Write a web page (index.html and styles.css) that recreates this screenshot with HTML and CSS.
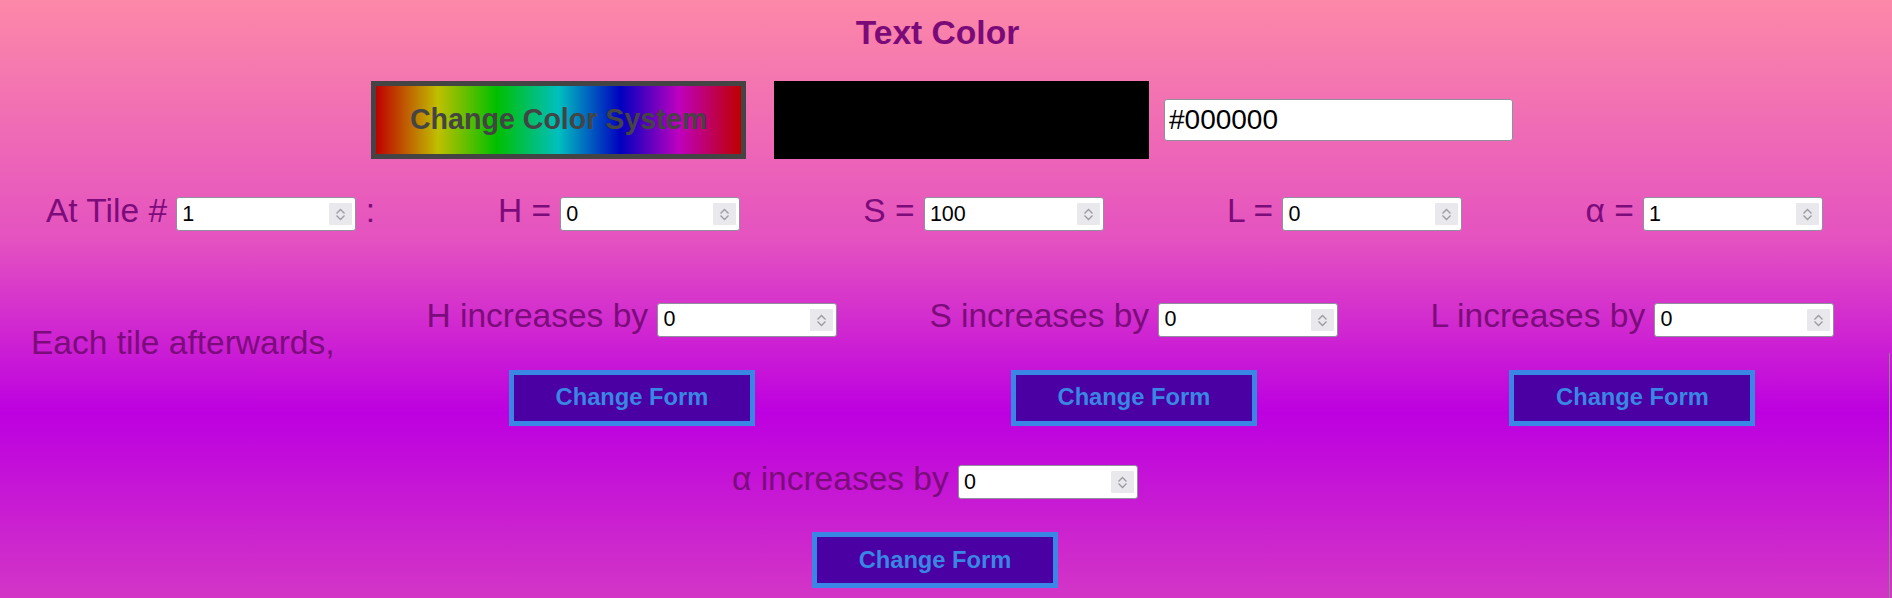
FILE: index.html
```html
<!DOCTYPE html>
<html lang="en">
<head>
<meta charset="utf-8">
<title>Text Color</title>
<link rel="stylesheet" href="styles.css">
</head>
<body>
<div class="page">
  <h1 class="title">Text Color</h1>

  <div class="row-top">
    <button class="system-btn" type="button">Change Color System</button>
    <div class="swatch"></div>
    <input class="hex" type="text" value="#000000">
  </div>

  <div class="row-start">
    <label class="grp">At Tile # <span class="numwrap"><input class="num" type="number" value="1"><span class="spin"><svg viewBox="0 0 23 22" width="23" height="22"><path d="M7.5 10.5 L11.5 6.5 L15.5 10.5 M7.5 12.5 L11.5 16.5 L15.5 12.5" fill="none" stroke="#9a9aa2" stroke-width="1.3"/></svg></span></span> :</label>
    <label class="grp">H = <span class="numwrap"><input class="num" type="number" value="0"><span class="spin"><svg viewBox="0 0 23 22" width="23" height="22"><path d="M7.5 10.5 L11.5 6.5 L15.5 10.5 M7.5 12.5 L11.5 16.5 L15.5 12.5" fill="none" stroke="#9a9aa2" stroke-width="1.3"/></svg></span></span></label>
    <label class="grp">S = <span class="numwrap"><input class="num" type="number" value="100"><span class="spin"><svg viewBox="0 0 23 22" width="23" height="22"><path d="M7.5 10.5 L11.5 6.5 L15.5 10.5 M7.5 12.5 L11.5 16.5 L15.5 12.5" fill="none" stroke="#9a9aa2" stroke-width="1.3"/></svg></span></span></label>
    <label class="grp">L = <span class="numwrap"><input class="num" type="number" value="0"><span class="spin"><svg viewBox="0 0 23 22" width="23" height="22"><path d="M7.5 10.5 L11.5 6.5 L15.5 10.5 M7.5 12.5 L11.5 16.5 L15.5 12.5" fill="none" stroke="#9a9aa2" stroke-width="1.3"/></svg></span></span></label>
    <label class="grp">α = <span class="numwrap"><input class="num" type="number" value="1"><span class="spin"><svg viewBox="0 0 23 22" width="23" height="22"><path d="M7.5 10.5 L11.5 6.5 L15.5 10.5 M7.5 12.5 L11.5 16.5 L15.5 12.5" fill="none" stroke="#9a9aa2" stroke-width="1.3"/></svg></span></span></label>
  </div>

  <div class="row-inc">
    <div class="each">Each tile afterwards,</div>
    <div class="col">
      <label class="grp">H increases by <span class="numwrap"><input class="num" type="number" value="0"><span class="spin"><svg viewBox="0 0 23 22" width="23" height="22"><path d="M7.5 10.5 L11.5 6.5 L15.5 10.5 M7.5 12.5 L11.5 16.5 L15.5 12.5" fill="none" stroke="#9a9aa2" stroke-width="1.3"/></svg></span></span></label>
      <button class="form-btn" type="button">Change Form</button>
    </div>
    <div class="col">
      <label class="grp">S increases by <span class="numwrap"><input class="num" type="number" value="0"><span class="spin"><svg viewBox="0 0 23 22" width="23" height="22"><path d="M7.5 10.5 L11.5 6.5 L15.5 10.5 M7.5 12.5 L11.5 16.5 L15.5 12.5" fill="none" stroke="#9a9aa2" stroke-width="1.3"/></svg></span></span></label>
      <button class="form-btn" type="button">Change Form</button>
    </div>
    <div class="col">
      <label class="grp">L increases by <span class="numwrap"><input class="num" type="number" value="0"><span class="spin"><svg viewBox="0 0 23 22" width="23" height="22"><path d="M7.5 10.5 L11.5 6.5 L15.5 10.5 M7.5 12.5 L11.5 16.5 L15.5 12.5" fill="none" stroke="#9a9aa2" stroke-width="1.3"/></svg></span></span></label>
      <button class="form-btn" type="button">Change Form</button>
    </div>
  </div>

  <div class="row-alpha">
    <div class="col">
      <label class="grp">α increases by <span class="numwrap"><input class="num" type="number" value="0"><span class="spin"><svg viewBox="0 0 23 22" width="23" height="22"><path d="M7.5 10.5 L11.5 6.5 L15.5 10.5 M7.5 12.5 L11.5 16.5 L15.5 12.5" fill="none" stroke="#9a9aa2" stroke-width="1.3"/></svg></span></span></label>
      <button class="form-btn" type="button">Change Form</button>
    </div>
  </div>
</div>
<div class="edge-line"></div>
</body>
</html>
```

FILE: styles.css
```css
html, body {
  margin: 0;
  padding: 0;
}

body {
  width: 1892px;
  height: 598px;
  overflow: hidden;
  position: relative;
  font-family: "Liberation Sans", Arial, sans-serif;
  color: #7c0c7c;
  background: linear-gradient(180deg, #fc88a8 0%, #e452c0 40%, #bd00e0 69%, #d336c6 100%);
}

.page {
  width: 1875px;
}

.title {
  margin: 14px 0 0 0;
  font-size: 33.6px;
  line-height: 1.15;
  font-weight: bold;
  text-align: center;
  color: #7a0a78;
}

.row-top {
  display: flex;
  align-items: center;
  justify-content: center;
  margin-top: 28px;
  padding-left: 9px;
}

.system-btn {
  width: 375px;
  height: 78px;
  box-sizing: border-box;
  border: 5px solid #444444;
  background: linear-gradient(90deg, #bf0000 0%, #bfbf00 17%, #00bf00 33%, #00bfbf 50%, #0000bf 67%, #bf00bf 83%, #bf0000 100%);
  color: #444444;
  font-family: "Liberation Sans", Arial, sans-serif;
  font-size: 28.6px;
  font-weight: bold;
  padding: 0;
  cursor: pointer;
}

.swatch {
  width: 375px;
  height: 78px;
  background: #000000;
  margin-left: 28px;
}

.hex {
  width: 349px;
  height: 42px;
  box-sizing: border-box;
  margin-left: 15px;
  border: 1px solid #8f8f9d;
  border-radius: 3px;
  padding: 0 4px;
  font-family: "Liberation Sans", Arial, sans-serif;
  font-size: 28px;
  color: #000;
  background: #fff;
}

.grp {
  font-size: 33.5px;
  line-height: 1.15;
  white-space: nowrap;
}

.numwrap {
  position: relative;
  display: inline-block;
  vertical-align: 1px;
  line-height: 0;
}

.num {
  width: 180px;
  height: 34px;
  box-sizing: border-box;
  border: 1px solid #8f8f9d;
  border-radius: 3px;
  padding: 0 30px 0 5px;
  font-family: "Liberation Sans", Arial, sans-serif;
  font-size: 21.5px;
  color: #000;
  background: #fff;
  -moz-appearance: textfield;
  appearance: textfield;
}

.num::-webkit-inner-spin-button,
.num::-webkit-outer-spin-button {
  -webkit-appearance: none;
  margin: 0;
}

.spin {
  position: absolute;
  right: 4px;
  top: 6px;
  width: 23px;
  height: 22px;
  background: #e9e9ed;
  border-radius: 1px;
}

.spin svg {
  display: block;
}

.row-start {
  display: flex;
  align-items: center;
  gap: 123px;
  padding-left: 46px;
  margin-top: 33px;
}

.row-inc {
  display: flex;
  align-items: flex-start;
  gap: 92px;
  padding-left: 31px;
  margin-top: 66px;
}

.each {
  font-size: 33.5px;
  line-height: 1.15;
  margin-top: 27px;
  white-space: nowrap;
}

.col {
  display: flex;
  flex-direction: column;
  align-items: center;
}

.form-btn {
  width: 246px;
  height: 56px;
  box-sizing: border-box;
  margin-top: 33px;
  border: 5px solid #3a86e4;
  background: #4a00a2;
  color: #3a86e4;
  font-family: "Liberation Sans", Arial, sans-serif;
  font-size: 23.7px;
  font-weight: bold;
  padding: 0;
  cursor: pointer;
}

.row-alpha {
  display: flex;
  justify-content: center;
  margin-top: 34px;
  padding-right: 5px;
}

.edge-line {
  position: absolute;
  left: 1889px;
  top: 353px;
  width: 1px;
  height: 245px;
  background: #8a8a8a;
}
```
